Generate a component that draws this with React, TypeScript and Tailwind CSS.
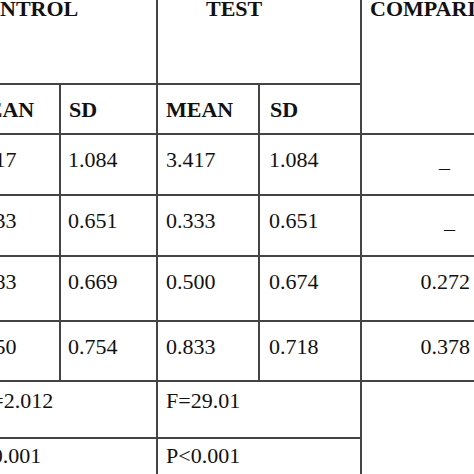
import React from 'react';

const cell = 'border-2 border-[#444] align-top';

const rows = [
  { cm: '3.417', cs: '1.084', tm: '3.417', ts: '1.084', cmp: '_', cmpPad: 'pr-[30px]', h: 'h-[61px]' },
  { cm: '0.333', cs: '0.651', tm: '0.333', ts: '0.651', cmp: '_', cmpPad: 'pr-[25px]', h: 'h-[61px]' },
  { cm: '0.583', cs: '0.669', tm: '0.500', ts: '0.674', cmp: '0.272', cmpPad: 'pr-[10px]', h: 'h-[65px]' },
  { cm: '0.750', cs: '0.754', tm: '0.833', ts: '0.718', cmp: '0.378', cmpPad: 'pr-[10px]', h: 'h-[60px]' },
];

export default function App() {
  return (
    <div className="w-[474px] h-[474px] overflow-hidden bg-white">
      <table
        className="table-fixed border-collapse -ml-[45px] -mt-[17px] w-[525px] text-[22px] leading-[25px] text-[#111]"
        style={{ fontFamily: '"Liberation Serif", "Times New Roman", serif' }}
      >
        <colgroup>
          <col className="w-[104px]" />
          <col className="w-[97px]" />
          <col className="w-[102px]" />
          <col className="w-[102px]" />
          <col className="w-[120px]" />
        </colgroup>
        <thead className="font-bold">
          <tr className="h-[100px]">
            <th colSpan={2} className={`${cell} text-left font-bold pt-[11px] pl-[10px]`}>
              CONTROL
            </th>
            <th colSpan={2} className={`${cell} text-left font-bold pt-[11px] pl-[48px]`}>
              TEST
            </th>
            <th rowSpan={2} className={`${cell} text-left font-bold pt-[11px] pl-[8px] whitespace-nowrap`}>
              COMPARISON
            </th>
          </tr>
          <tr className="h-[50px]">
            <th className={`${cell} text-left font-bold pt-[12px] pl-[10px]`}>MEAN</th>
            <th className={`${cell} text-left font-bold pt-[12px] pl-[8px]`}>SD</th>
            <th className={`${cell} text-left font-bold pt-[12px] pl-[8px]`}>MEAN</th>
            <th className={`${cell} text-left font-bold pt-[12px] pl-[10px]`}>SD</th>
          </tr>
        </thead>
        <tbody>
          {rows.map((r, i) => (
            <tr key={i} className={r.h}>
              <td className={`${cell} pt-[12px] pl-[10px]`}>{r.cm}</td>
              <td className={`${cell} pt-[12px] pl-[7px]`}>{r.cs}</td>
              <td className={`${cell} pt-[12px] pl-[8px]`}>{r.tm}</td>
              <td className={`${cell} pt-[12px] pl-[9px]`}>{r.ts}</td>
              <td className={`${cell} pt-[12px] text-right ${r.cmpPad}`}>{r.cmp}</td>
            </tr>
          ))}
          <tr className="h-[57px]">
            <td colSpan={2} className={`${cell} pt-[6px] pl-[22px]`}>F=2.012</td>
            <td colSpan={2} className={`${cell} pt-[6px] pl-[8px]`}>F=29.01</td>
            <td rowSpan={2} className={cell}></td>
          </tr>
          <tr className="h-[60px]">
            <td colSpan={2} className={`${cell} pt-[4px] pl-[10px]`}>P&lt;0.001</td>
            <td colSpan={2} className={`${cell} pt-[4px] pl-[8px]`}>P&lt;0.001</td>
          </tr>
        </tbody>
      </table>
    </div>
  );
}
